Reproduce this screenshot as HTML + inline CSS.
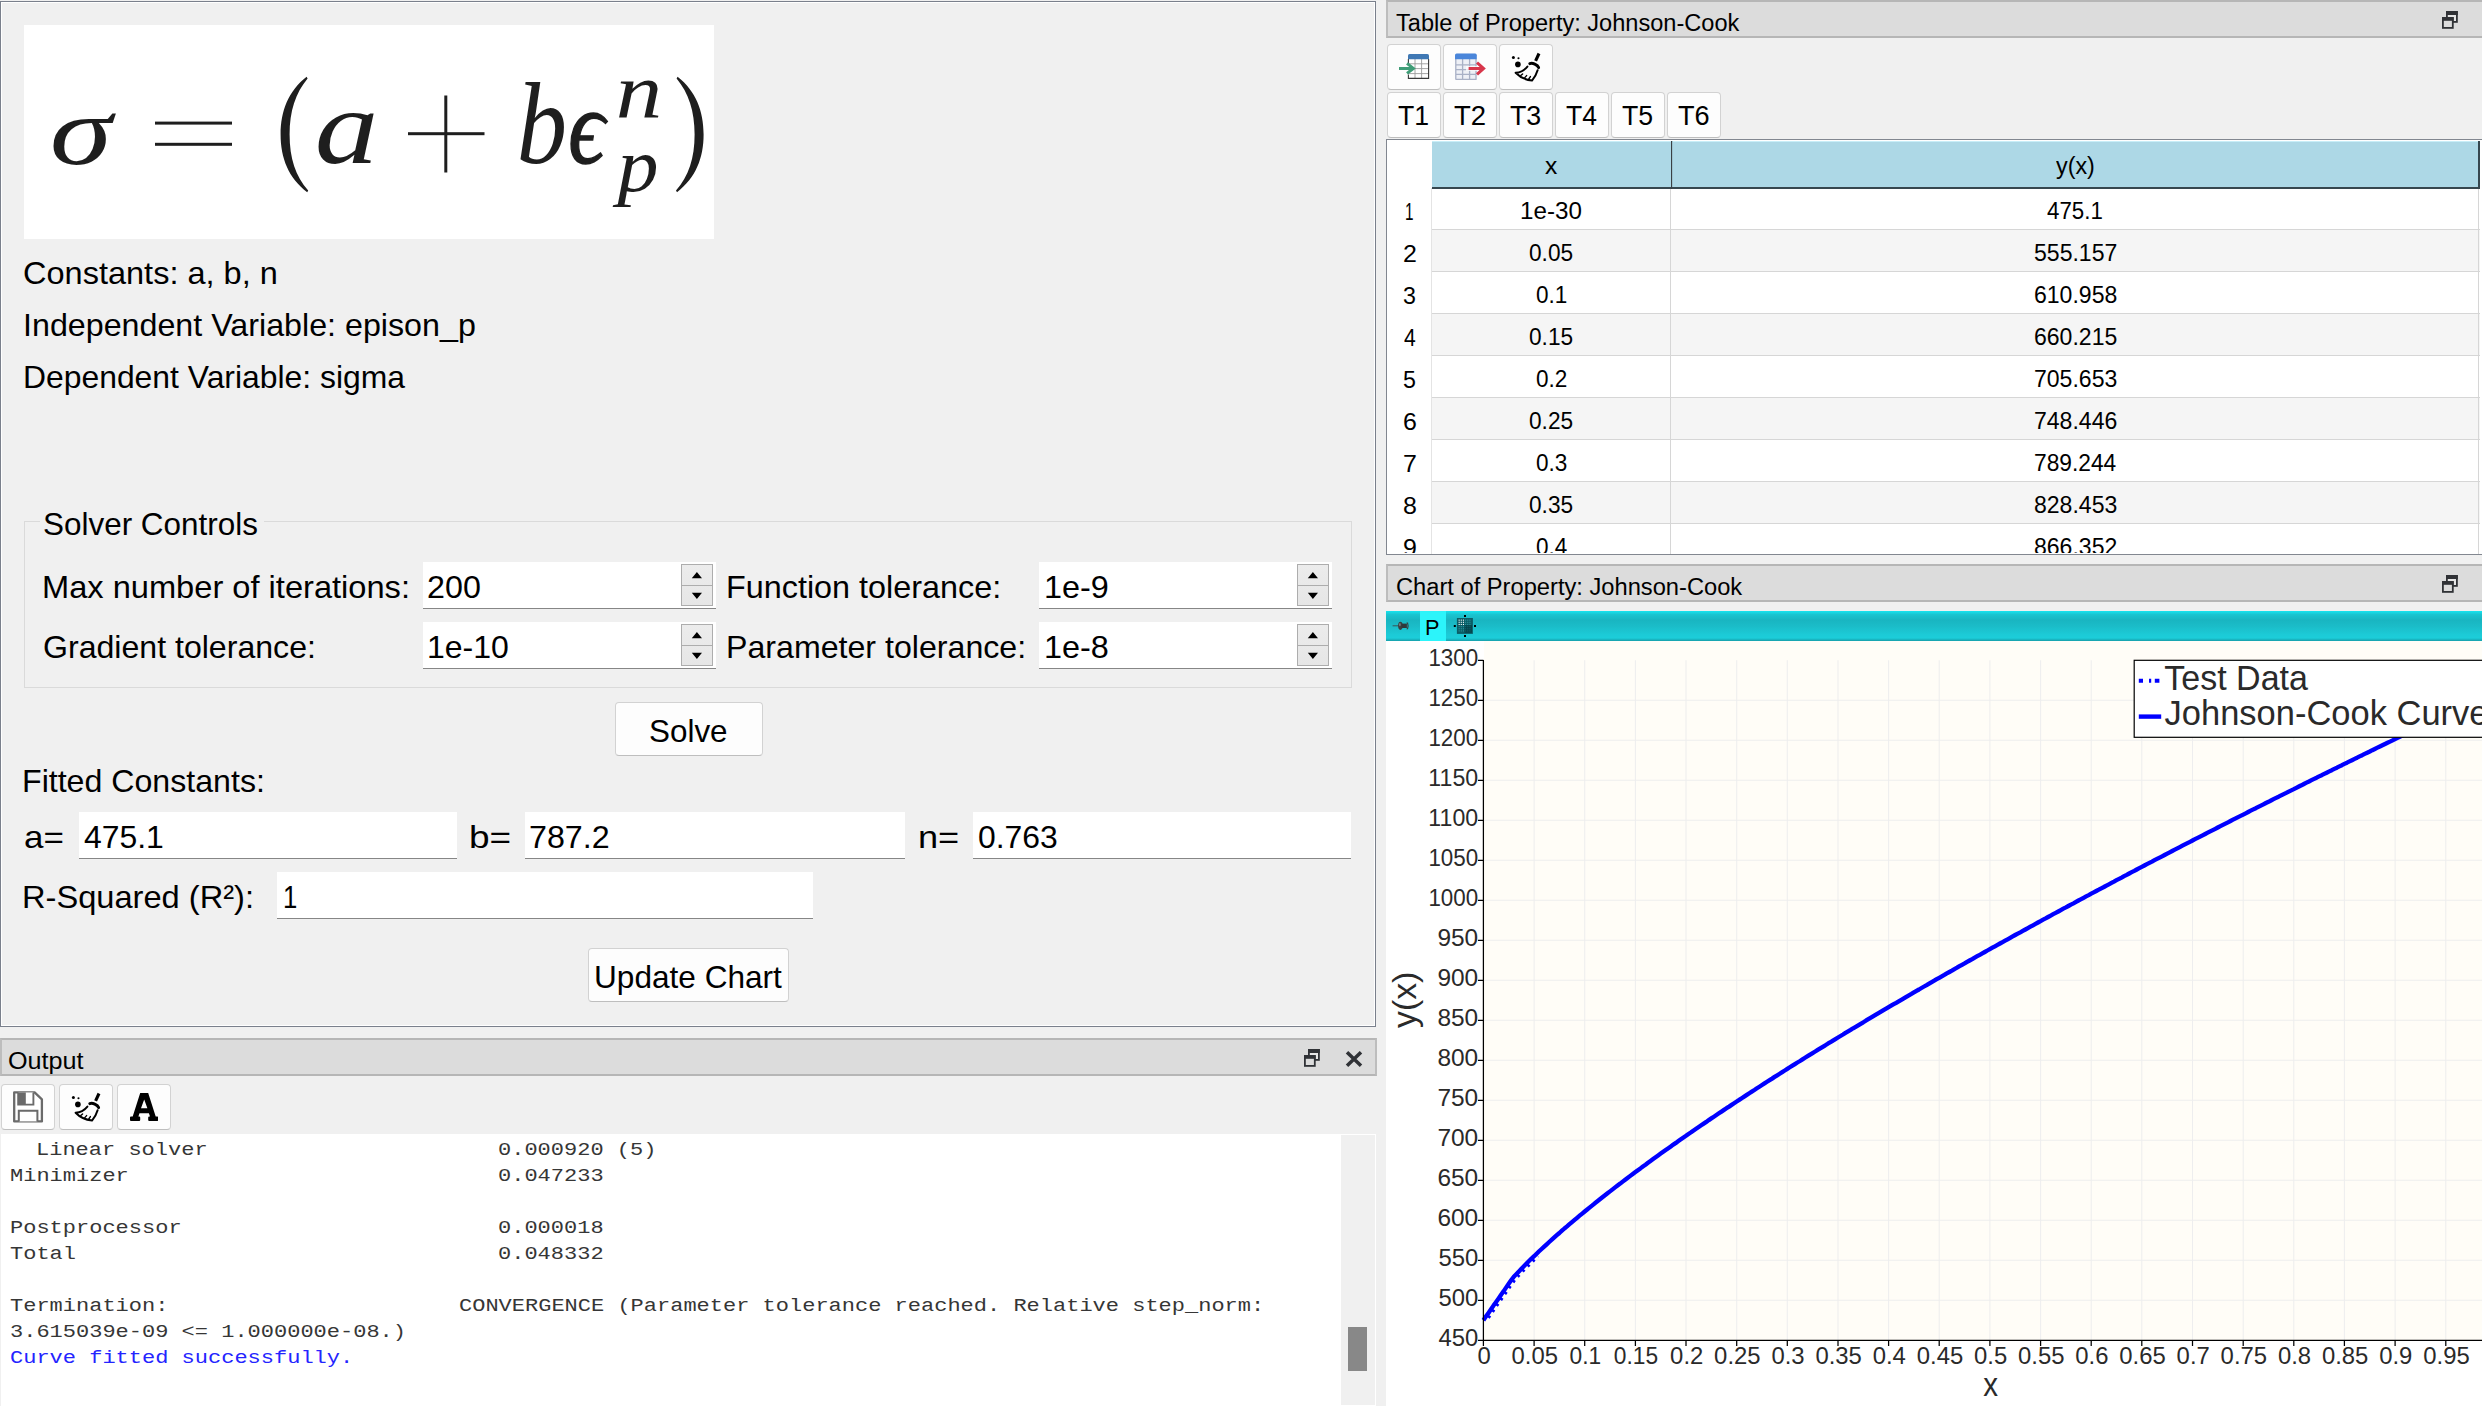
<!DOCTYPE html>
<html lang="en"><head><meta charset="utf-8"><title>Johnson-Cook Curve Fit</title><style>html,body{margin:0;padding:0}
html{width:2482px;height:1406px;overflow:hidden}
body{width:2482px;height:1406px;overflow:hidden;background:#f0f0f0;position:relative;font-family:"Liberation Sans",sans-serif;color:#000}
body div,body svg{position:absolute}
.t{white-space:pre;transform-origin:0 0}
.m{font-family:"Liberation Mono",monospace}
</style></head><body>
<div id="app" style="left:0;top:0;width:2482px;height:1406px;overflow:hidden">
<div style="left:0;top:1px;width:1376px;height:1026px;box-sizing:border-box;border:1px solid #7a808c;background:#fff"></div>
<div style="left:2px;top:3px;width:1372px;height:1022px;background:#f0f0f0;"></div>
<div style="left:24px;top:25px;width:690px;height:214px;background:#fff;"></div>
<svg style="left:0;top:0" width="740" height="250" viewBox="0 0 740 250"><text transform="translate(49.85,163.52) scale(0.6300,0.4905)" font-size="200" font-family="'Liberation Serif',serif" font-style="italic" font-weight="400" fill="#1e1e1e">σ</text><text transform="translate(314.82,162.94) scale(0.6364,0.5312)" font-size="200" font-family="'Liberation Serif',serif" font-style="italic" font-weight="400" fill="#1e1e1e">a</text><text transform="translate(516.78,163.34) scale(0.5023,0.5780)" font-size="200" font-family="'Liberation Serif',serif" font-style="italic" font-weight="400" fill="#1e1e1e">b</text><text transform="translate(568.35,162.95) scale(0.4506,0.5250)" font-size="200" font-family="'Liberation Serif',serif" font-style="italic" font-weight="400" fill="#1e1e1e" stroke="#1e1e1e" stroke-width="2.67">ϵ</text><text transform="translate(615.75,117.50) scale(0.4647,0.3947)" font-size="200" font-family="'Liberation Serif',serif" font-style="italic" font-weight="400" fill="#1e1e1e">n</text><text transform="translate(617.42,191.06) scale(0.4104,0.3796)" font-size="200" font-family="'Liberation Serif',serif" font-style="italic" font-weight="400" fill="#1e1e1e">p</text><rect x="155" y="121.6" width="77" height="3" fill="#1e1e1e"/><rect x="155" y="142.8" width="77" height="3" fill="#1e1e1e"/><rect x="408" y="132.2" width="76.5" height="3" fill="#1e1e1e"/><rect x="444.3" y="95.5" width="3" height="77" fill="#1e1e1e"/><path d="M306.6 76.8 C288.5 91 280.6 111 280.6 134.5 C280.6 158 288.5 178 307.2 192.2 L308.2 190.6 C295.5 176 289.6 158 289.6 134.5 C289.6 111 295.5 93 307.6 78.4 Z" fill="#1e1e1e"/><path d="M677.6 76.8 C695.7 91 703.6 111 703.6 134.5 C703.6 158 695.7 178 677 192.2 L676 190.6 C688.7 176 694.6 158 694.6 134.5 C694.6 111 688.7 93 676.6 78.4 Z" fill="#1e1e1e"/></svg>
<div class="t" style="left:22.98px;top:255.00px;font-size:32px;line-height:36px;transform:scaleX(1.0161);">Constants: a, b, n</div>
<div class="t" style="left:22.98px;top:307.00px;font-size:32px;line-height:36px;transform:scaleX(1.0073);">Independent Variable: epison_p</div>
<div class="t" style="left:23.00px;top:359.00px;font-size:32px;line-height:36px;transform:scaleX(0.9957);">Dependent Variable: sigma</div>
<div style="left:24px;top:521px;width:1328px;height:167px;box-sizing:border-box;border:1px solid #dadada"></div>
<div style="left:40px;top:515px;width:224px;height:14px;background:#f0f0f0;"></div>
<div class="t" style="left:43.01px;top:506.00px;font-size:32px;line-height:36px;transform:scaleX(0.9827);">Solver Controls</div>
<div class="t" style="left:41.96px;top:569.00px;font-size:32px;line-height:36px;transform:scaleX(1.0192);">Max number of iterations:</div>
<div class="t" style="left:43.00px;top:629.00px;font-size:32px;line-height:36px;transform:scaleX(1.0027);">Gradient tolerance:</div>
<div class="t" style="left:725.77px;top:569.00px;font-size:32px;line-height:36px;transform:scaleX(1.0110);">Function tolerance:</div>
<div class="t" style="left:725.79px;top:629.00px;font-size:32px;line-height:36px;transform:scaleX(1.0044);">Parameter tolerance:</div>
<div style="left:423px;top:562px;width:293px;height:47px;background:#fff;box-sizing:border-box;border-bottom:1px solid #868686"></div>
<div style="left:681px;top:564px;width:32px;height:42px;box-sizing:border-box;border:1px solid #adadad;background:linear-gradient(#ececec,#e6e6e6)"></div>
<div style="left:682px;top:585px;width:30px;height:1px;background:#adadad;"></div>
<svg style="left:681px;top:564px" width="32" height="42" viewBox="0 0 32 42"><path d="M10.8 14.3 L21 14.3 L15.9 8.1 Z M10.8 28.7 L21 28.7 L15.9 34.9 Z" fill="#000"/></svg>
<div class="t" style="left:426.97px;top:569.00px;font-size:32px;line-height:36px;transform:scaleX(1.0083);">200</div>
<div style="left:423px;top:622px;width:293px;height:47px;background:#fff;box-sizing:border-box;border-bottom:1px solid #868686"></div>
<div style="left:681px;top:624px;width:32px;height:42px;box-sizing:border-box;border:1px solid #adadad;background:linear-gradient(#ececec,#e6e6e6)"></div>
<div style="left:682px;top:645px;width:30px;height:1px;background:#adadad;"></div>
<svg style="left:681px;top:624px" width="32" height="42" viewBox="0 0 32 42"><path d="M10.8 14.3 L21 14.3 L15.9 8.1 Z M10.8 28.7 L21 28.7 L15.9 34.9 Z" fill="#000"/></svg>
<div class="t" style="left:427.00px;top:629.00px;font-size:32px;line-height:36px;">1e-10</div>
<div style="left:1039px;top:562px;width:293px;height:47px;background:#fff;box-sizing:border-box;border-bottom:1px solid #868686"></div>
<div style="left:1297px;top:564px;width:32px;height:42px;box-sizing:border-box;border:1px solid #adadad;background:linear-gradient(#ececec,#e6e6e6)"></div>
<div style="left:1298px;top:585px;width:30px;height:1px;background:#adadad;"></div>
<svg style="left:1297px;top:564px" width="32" height="42" viewBox="0 0 32 42"><path d="M10.8 14.3 L21 14.3 L15.9 8.1 Z M10.8 28.7 L21 28.7 L15.9 34.9 Z" fill="#000"/></svg>
<div class="t" style="left:1043.97px;top:569.00px;font-size:32px;line-height:36px;transform:scaleX(1.0125);">1e-9</div>
<div style="left:1039px;top:622px;width:293px;height:47px;background:#fff;box-sizing:border-box;border-bottom:1px solid #868686"></div>
<div style="left:1297px;top:624px;width:32px;height:42px;box-sizing:border-box;border:1px solid #adadad;background:linear-gradient(#ececec,#e6e6e6)"></div>
<div style="left:1298px;top:645px;width:30px;height:1px;background:#adadad;"></div>
<svg style="left:1297px;top:624px" width="32" height="42" viewBox="0 0 32 42"><path d="M10.8 14.3 L21 14.3 L15.9 8.1 Z M10.8 28.7 L21 28.7 L15.9 34.9 Z" fill="#000"/></svg>
<div class="t" style="left:1043.97px;top:629.00px;font-size:32px;line-height:36px;transform:scaleX(1.0128);">1e-8</div>
<div style="left:615px;top:702px;width:148px;height:54px;box-sizing:border-box;border:1px solid #d2d2d2;border-bottom-color:#bebebe;border-radius:4px;background:#fdfdfd"></div>
<div class="t" style="left:649.00px;top:713.00px;font-size:32px;line-height:36px;transform:scaleX(0.9818);">Solve</div>
<div class="t" style="left:21.99px;top:763.00px;font-size:32px;line-height:36px;transform:scaleX(1.0042);">Fitted Constants:</div>
<div style="left:79px;top:812px;width:378px;height:47px;background:#fff;box-sizing:border-box;border-bottom:1px solid #868686"></div>
<div style="left:525px;top:812px;width:380px;height:47px;background:#fff;box-sizing:border-box;border-bottom:1px solid #868686"></div>
<div style="left:973px;top:812px;width:378px;height:47px;background:#fff;box-sizing:border-box;border-bottom:1px solid #868686"></div>
<div class="t" style="left:23.92px;top:819.00px;font-size:32px;line-height:36px;transform:scaleX(1.0929);">a=</div>
<div class="t" style="left:83.96px;top:819.00px;font-size:32px;line-height:36px;transform:scaleX(0.9971);">475.1</div>
<div class="t" style="left:468.69px;top:819.00px;font-size:32px;line-height:36px;transform:scaleX(1.1548);">b=</div>
<div class="t" style="left:528.97px;top:819.00px;font-size:32px;line-height:36px;transform:scaleX(1.0070);">787.2</div>
<div class="t" style="left:917.54px;top:819.00px;font-size:32px;line-height:36px;transform:scaleX(1.1306);">n=</div>
<div class="t" style="left:977.80px;top:819.00px;font-size:32px;line-height:36px;transform:scaleX(0.9965);">0.763</div>
<div class="t" style="left:21.96px;top:879.00px;font-size:32px;line-height:36px;transform:scaleX(1.0192);">R-Squared (R²):</div>
<div style="left:277px;top:872px;width:536px;height:47px;background:#fff;box-sizing:border-box;border-bottom:1px solid #868686"></div>
<div class="t" style="left:283.39px;top:879.00px;font-size:32px;line-height:36px;transform:scaleX(0.8030);">1</div>
<div style="left:588px;top:948px;width:201px;height:54px;box-sizing:border-box;border:1px solid #d2d2d2;border-bottom-color:#bebebe;border-radius:4px;background:#fdfdfd"></div>
<div class="t" style="left:593.83px;top:959.00px;font-size:32px;line-height:36px;transform:scaleX(0.9871);">Update Chart</div>
<div style="left:0px;top:1038px;width:1377px;height:38px;box-sizing:border-box;background:#dcdcdc;border:2px solid #b6b6b6;border-left-color:#bdbdbd;border-right-color:#bdbdbd"></div>
<div class="t" style="left:7.93px;top:1047.70px;font-size:23.5px;line-height:26px;transform:scaleX(1.0713);">Output</div>
<svg style="left:1304.1px;top:1049.05px" width="17" height="19" viewBox="0 0 17 19"><rect x="4.9" y="0.9" width="10" height="10" fill="#e6e6e6" stroke="#303236" stroke-width="1.8"/><rect x="4" y="0" width="11.8" height="4" fill="#303236"/><rect x="0.9" y="7" width="9.9" height="9.9" fill="#dcdcdc" stroke="#303236" stroke-width="1.8"/><rect x="0" y="6.1" width="11.7" height="3.7" fill="#303236"/></svg>
<svg style="left:1344px;top:1049px" width="20" height="20" viewBox="0 0 20 20"><path d="M3 3.2 L17 16.8 M17 3.2 L3 16.8" stroke="#303236" stroke-width="3.5" fill="none"/></svg>
<div style="left:1px;top:1084px;width:54px;height:46px;box-sizing:border-box;border:1px solid #d2d2d2;border-bottom-color:#bebebe;border-radius:4px;background:#fdfdfd"></div>
<div style="left:59px;top:1084px;width:54px;height:46px;box-sizing:border-box;border:1px solid #d2d2d2;border-bottom-color:#bebebe;border-radius:4px;background:#fdfdfd"></div>
<div style="left:117px;top:1084px;width:54px;height:46px;box-sizing:border-box;border:1px solid #d2d2d2;border-bottom-color:#bebebe;border-radius:4px;background:#fdfdfd"></div>
<svg style="left:12px;top:1090px" width="33" height="34" viewBox="0 0 33 34"><path d="M2.2 2.4 H22.6 L29.9 9.3 V31.4 H2.2 Z" fill="#fff" stroke="#6a6a6a" stroke-width="2.3" stroke-linejoin="round"/><path d="M6.2 2.4 V14.6 H21.4 V2.4" fill="#fff" stroke="#6a6a6a" stroke-width="1.9"/><rect x="6.2" y="2.4" width="7.6" height="12.2" fill="#6a6a6a"/><path d="M6.8 31.4 V20.8 H25.4 V31.4" fill="#fff" stroke="#6a6a6a" stroke-width="2"/></svg><svg style="left:70.5px;top:1091.6px" width="31" height="31" viewBox="0 0 31 31"><g fill="none" stroke="#000" stroke-linecap="round" stroke-linejoin="round">
<path d="M28 1.5 L24.6 8.8" stroke-width="3.1" stroke-linecap="butt"/>
<path d="M18.8 11.6 C21.5 10.6 26.5 12.6 27.6 15.6" stroke-width="3"/>
<path d="M16.4 14.6 C13 18.8 8.6 20.6 4.6 20.8 C8.6 25 14.2 27.8 21 28.6 C23.6 25.6 25.6 21.6 26.6 18.2" stroke-width="2"/>
<path d="M9.8 23.6 L11.6 22 M13.8 25.6 L15.6 23.6 M17.8 27 L19.4 24.6" stroke-width="1.4"/>
</g>
<circle cx="2.4" cy="5.6" r="1.5" fill="#000"/><circle cx="7.5" cy="6.2" r="1.05" fill="#000"/><circle cx="6.9" cy="12.4" r="2.8" fill="#000"/></svg><svg style="left:129.8px;top:1093px" width="28.4" height="28" viewBox="0 0 28.4 28"><path fill-rule="evenodd" d="M10.2 0 H18.2 L25.7 23.6 H27.4 Q28.4 23.6 28.4 24.6 V27 Q28.4 28 27.4 28 H19.2 Q18.2 28 18.2 27 V24.6 Q18.2 23.6 19.2 23.6 H20 L18.9 20.3 H9.5 L8.4 23.6 H9.2 Q10.2 23.6 10.2 24.6 V27 Q10.2 28 9.2 28 H1 Q0 28 0 27 V24.6 Q0 23.6 1 23.6 H2.7 Z M14.2 6.6 L11 15.2 H17.4 Z" fill="#000"/></svg>
<div style="left:1px;top:1134px;width:1375px;height:272px;background:#fff;"></div>
<div style="left:1341px;top:1135px;width:34px;height:270px;background:#f0f0f0;"></div>
<div style="left:1348px;top:1327px;width:19px;height:44px;background:#888888;"></div>
<div class="t m" style="left:36.40px;top:1139.00px;font-size:19px;line-height:22px;transform:scaleX(1.1577);color:#363636;">Linear solver</div>
<div class="t m" style="left:498.40px;top:1139.00px;font-size:19px;line-height:22px;transform:scaleX(1.1577);color:#363636;">0.000920 (5)</div>
<div class="t m" style="left:10.00px;top:1165.00px;font-size:19px;line-height:22px;transform:scaleX(1.1577);color:#363636;">Minimizer</div>
<div class="t m" style="left:498.40px;top:1165.00px;font-size:19px;line-height:22px;transform:scaleX(1.1577);color:#363636;">0.047233</div>
<div class="t m" style="left:10.00px;top:1217.00px;font-size:19px;line-height:22px;transform:scaleX(1.1577);color:#363636;">Postprocessor</div>
<div class="t m" style="left:498.40px;top:1217.00px;font-size:19px;line-height:22px;transform:scaleX(1.1577);color:#363636;">0.000018</div>
<div class="t m" style="left:10.00px;top:1243.00px;font-size:19px;line-height:22px;transform:scaleX(1.1577);color:#363636;">Total</div>
<div class="t m" style="left:498.40px;top:1243.00px;font-size:19px;line-height:22px;transform:scaleX(1.1577);color:#363636;">0.048332</div>
<div class="t m" style="left:10.00px;top:1295.00px;font-size:19px;line-height:22px;transform:scaleX(1.1577);color:#363636;">Termination:</div>
<div class="t m" style="left:458.80px;top:1295.00px;font-size:19px;line-height:22px;transform:scaleX(1.1577);color:#363636;">CONVERGENCE (Parameter tolerance reached. Relative step_norm:</div>
<div class="t m" style="left:10.00px;top:1321.00px;font-size:19px;line-height:22px;transform:scaleX(1.1577);color:#363636;">3.615039e-09 &lt;= 1.000000e-08.)</div>
<div class="t m" style="left:10.00px;top:1347.00px;font-size:19px;line-height:22px;transform:scaleX(1.1577);color:#2424ff;">Curve fitted successfully.</div>
<div style="left:1386px;top:0px;width:1100px;height:38px;box-sizing:border-box;background:#dcdcdc;border:2px solid #b6b6b6;border-left-color:#bdbdbd;border-right-color:#bdbdbd"></div>
<div class="t" style="left:1395.60px;top:9.50px;font-size:23.5px;line-height:26px;transform:scaleX(1.0032);">Table of Property: Johnson-Cook</div>
<svg style="left:2441.6px;top:11px" width="17" height="19" viewBox="0 0 17 19"><rect x="4.9" y="0.9" width="10" height="10" fill="#e6e6e6" stroke="#303236" stroke-width="1.8"/><rect x="4" y="0" width="11.8" height="4" fill="#303236"/><rect x="0.9" y="7" width="9.9" height="9.9" fill="#dcdcdc" stroke="#303236" stroke-width="1.8"/><rect x="0" y="6.1" width="11.7" height="3.7" fill="#303236"/></svg>
<div style="left:1387px;top:44px;width:54px;height:46px;box-sizing:border-box;border:1px solid #d2d2d2;border-bottom-color:#bebebe;border-radius:4px;background:#fdfdfd"></div>
<div style="left:1443px;top:44px;width:54px;height:46px;box-sizing:border-box;border:1px solid #d2d2d2;border-bottom-color:#bebebe;border-radius:4px;background:#fdfdfd"></div>
<div style="left:1499px;top:44px;width:54px;height:46px;box-sizing:border-box;border:1px solid #d2d2d2;border-bottom-color:#bebebe;border-radius:4px;background:#fdfdfd"></div>
<svg style="left:1396px;top:50px" width="38" height="34" viewBox="0 0 38 34">
<rect x="12.2" y="4.2" width="20.6" height="24.4" fill="#fff"/>
<path d="M19 9 V28.6 M25.6 9 V28.6 M12.2 13.8 H32.8 M12.2 18.6 H32.8 M12.2 23.6 H32.8" stroke="#9c9c9c" stroke-width="0.9" fill="none"/>
<path d="M12.4 9 V13 M12.4 24.6 V28.4 H32.6 V9" stroke="#3a3a3a" stroke-width="1.1" fill="none"/>
<path d="M12 9.2 V5.6 Q12 4 13.6 4 H31.4 Q33 4 33 5.6 V9.2 Z" fill="#3f78b4"/>
<path d="M3 18.4 H16 M11 13.4 L17.4 18.4 L11 23.4" stroke="#3f9d77" stroke-width="3" fill="none"/>
</svg><svg style="left:1452px;top:50px" width="38" height="34" viewBox="0 0 38 34">
<rect x="3" y="3.6" width="21.8" height="26.4" rx="1.6" fill="#eef0f6"/>
<path d="M3.8 9 V29 M10.6 9 V29.4 M17.6 9 V29.4 M24 9 V29 M3.4 14.8 H24.6 M3.4 19.6 H24.6 M3.4 24.4 H24.6 M3.4 29.4 H24.6" stroke="#a9b1c6" stroke-width="1.3" fill="none"/>
<path d="M3 9.2 V5.2 Q3 3.5 4.7 3.5 H23.1 Q24.8 3.5 24.8 5.2 V9.2 Z" fill="#4a86da"/>
<path d="M14 16 H33 V21 H14 Z" fill="#fdfdfd" opacity="0.75"/>
<path d="M16.6 18.4 H30 M25 12.6 L31.6 18.4 L25 24.4" stroke="#d8364b" stroke-width="3" fill="none"/>
</svg><svg style="left:1510.6px;top:52px" width="31" height="31" viewBox="0 0 31 31"><g fill="none" stroke="#000" stroke-linecap="round" stroke-linejoin="round">
<path d="M28 1.5 L24.6 8.8" stroke-width="3.1" stroke-linecap="butt"/>
<path d="M18.8 11.6 C21.5 10.6 26.5 12.6 27.6 15.6" stroke-width="3"/>
<path d="M16.4 14.6 C13 18.8 8.6 20.6 4.6 20.8 C8.6 25 14.2 27.8 21 28.6 C23.6 25.6 25.6 21.6 26.6 18.2" stroke-width="2"/>
<path d="M9.8 23.6 L11.6 22 M13.8 25.6 L15.6 23.6 M17.8 27 L19.4 24.6" stroke-width="1.4"/>
</g>
<circle cx="2.4" cy="5.6" r="1.5" fill="#000"/><circle cx="7.5" cy="6.2" r="1.05" fill="#000"/><circle cx="6.9" cy="12.4" r="2.8" fill="#000"/></svg>
<div style="left:1387px;top:92px;width:54px;height:46px;box-sizing:border-box;border:1px solid #d2d2d2;border-bottom-color:#bebebe;border-radius:4px;background:#fdfdfd"></div>
<div class="t" style="left:1397.85px;top:99.80px;font-size:28px;line-height:31px;transform:scaleX(0.9518);">T1</div>
<div style="left:1443px;top:92px;width:54px;height:46px;box-sizing:border-box;border:1px solid #d2d2d2;border-bottom-color:#bebebe;border-radius:4px;background:#fdfdfd"></div>
<div class="t" style="left:1454.04px;top:99.80px;font-size:28px;line-height:31px;transform:scaleX(0.9829);">T2</div>
<div style="left:1499px;top:92px;width:54px;height:46px;box-sizing:border-box;border:1px solid #d2d2d2;border-bottom-color:#bebebe;border-radius:4px;background:#fdfdfd"></div>
<div class="t" style="left:1509.88px;top:99.80px;font-size:28px;line-height:31px;transform:scaleX(0.9570);">T3</div>
<div style="left:1555px;top:92px;width:54px;height:46px;box-sizing:border-box;border:1px solid #d2d2d2;border-bottom-color:#bebebe;border-radius:4px;background:#fdfdfd"></div>
<div class="t" style="left:1565.67px;top:99.80px;font-size:28px;line-height:31px;transform:scaleX(0.9456);">T4</div>
<div style="left:1611px;top:92px;width:54px;height:46px;box-sizing:border-box;border:1px solid #d2d2d2;border-bottom-color:#bebebe;border-radius:4px;background:#fdfdfd"></div>
<div class="t" style="left:1621.87px;top:99.80px;font-size:28px;line-height:31px;transform:scaleX(0.9521);">T5</div>
<div style="left:1667px;top:92px;width:54px;height:46px;box-sizing:border-box;border:1px solid #d2d2d2;border-bottom-color:#bebebe;border-radius:4px;background:#fdfdfd"></div>
<div class="t" style="left:1678.05px;top:99.80px;font-size:28px;line-height:31px;transform:scaleX(0.9699);">T6</div>
<div style="left:1386px;top:139px;width:1100px;height:416px;box-sizing:border-box;border:1px solid #828790;background:#fff;overflow:hidden" id="tbl">
<div style="left:45px;top:48px;width:1048px;height:42px;background:#fff;"></div>
<div style="left:45px;top:89px;width:1048px;height:1px;background:#d6d6d6;"></div>
<div style="left:45px;top:90px;width:1048px;height:42px;background:#f5f5f5;"></div>
<div style="left:45px;top:131px;width:1048px;height:1px;background:#d6d6d6;"></div>
<div style="left:45px;top:132px;width:1048px;height:42px;background:#fff;"></div>
<div style="left:45px;top:173px;width:1048px;height:1px;background:#d6d6d6;"></div>
<div style="left:45px;top:174px;width:1048px;height:42px;background:#f5f5f5;"></div>
<div style="left:45px;top:215px;width:1048px;height:1px;background:#d6d6d6;"></div>
<div style="left:45px;top:216px;width:1048px;height:42px;background:#fff;"></div>
<div style="left:45px;top:257px;width:1048px;height:1px;background:#d6d6d6;"></div>
<div style="left:45px;top:258px;width:1048px;height:42px;background:#f5f5f5;"></div>
<div style="left:45px;top:299px;width:1048px;height:1px;background:#d6d6d6;"></div>
<div style="left:45px;top:300px;width:1048px;height:42px;background:#fff;"></div>
<div style="left:45px;top:341px;width:1048px;height:1px;background:#d6d6d6;"></div>
<div style="left:45px;top:342px;width:1048px;height:42px;background:#f5f5f5;"></div>
<div style="left:45px;top:383px;width:1048px;height:1px;background:#d6d6d6;"></div>
<div style="left:45px;top:384px;width:1048px;height:42px;background:#fff;"></div>
<div style="left:45px;top:425px;width:1048px;height:1px;background:#d6d6d6;"></div>
<div style="left:44px;top:48px;width:1px;height:380px;background:#e4e4e4;"></div>
<div style="left:283px;top:48px;width:1px;height:380px;background:#d6d6d6;"></div>
<div style="left:1091px;top:49px;width:1px;height:380px;background:#d6d6d6;"></div>
<div style="left:45px;top:1px;width:1048px;height:48px;background:#add8e6;box-sizing:border-box;border-bottom:2px solid #36474f;border-top:1px solid #c8eef8"></div>
<div style="left:284px;top:1px;width:1px;height:48px;background:#3a4044;"></div>
<div style="left:285px;top:1px;width:1px;height:46px;background:#9cc4d1;"></div>
<div style="left:1091px;top:1px;width:2px;height:48px;background:#36474f;"></div>

</div>
<div style="left:1387px;top:140px;width:1095px;height:413px;overflow:hidden">
<div class="t" style="left:158.33px;top:12.80px;font-size:23px;line-height:26px;transform:scaleX(1.0694);">x</div>
<div class="t" style="left:669.39px;top:12.80px;font-size:23px;line-height:26px;transform:scaleX(1.0147);">y(x)</div>
<div class="t" style="left:17.97px;top:57.80px;font-size:24px;line-height:27px;transform:scaleX(0.6375);">1</div>
<div class="t" style="left:133.02px;top:57.10px;font-size:24px;line-height:27px;transform:scaleX(1.0079);">1e-30</div>
<div class="t" style="left:660.48px;top:57.10px;font-size:24px;line-height:27px;transform:scaleX(0.9286);">475.1</div>
<div class="t" style="left:16.19px;top:99.80px;font-size:24px;line-height:27px;transform:scaleX(1.0392);">2</div>
<div class="t" style="left:141.93px;top:99.10px;font-size:24px;line-height:27px;transform:scaleX(0.9432);">0.05</div>
<div class="t" style="left:646.69px;top:99.10px;font-size:24px;line-height:27px;transform:scaleX(0.9604);">555.157</div>
<div class="t" style="left:16.05px;top:141.80px;font-size:24px;line-height:27px;transform:scaleX(0.9672);">3</div>
<div class="t" style="left:148.80px;top:141.10px;font-size:24px;line-height:27px;transform:scaleX(0.9391);">0.1</div>
<div class="t" style="left:646.76px;top:141.10px;font-size:24px;line-height:27px;transform:scaleX(0.9597);">610.958</div>
<div class="t" style="left:17.19px;top:183.80px;font-size:24px;line-height:27px;transform:scaleX(0.8793);">4</div>
<div class="t" style="left:141.93px;top:183.10px;font-size:24px;line-height:27px;transform:scaleX(0.9432);">0.15</div>
<div class="t" style="left:646.76px;top:183.10px;font-size:24px;line-height:27px;transform:scaleX(0.9597);">660.215</div>
<div class="t" style="left:16.05px;top:225.80px;font-size:24px;line-height:27px;transform:scaleX(0.9672);">5</div>
<div class="t" style="left:148.80px;top:225.10px;font-size:24px;line-height:27px;transform:scaleX(0.9391);">0.2</div>
<div class="t" style="left:646.76px;top:225.10px;font-size:24px;line-height:27px;transform:scaleX(0.9597);">705.653</div>
<div class="t" style="left:16.19px;top:267.80px;font-size:24px;line-height:27px;transform:scaleX(1.0392);">6</div>
<div class="t" style="left:141.93px;top:267.10px;font-size:24px;line-height:27px;transform:scaleX(0.9432);">0.25</div>
<div class="t" style="left:646.76px;top:267.10px;font-size:24px;line-height:27px;transform:scaleX(0.9597);">748.446</div>
<div class="t" style="left:16.19px;top:309.80px;font-size:24px;line-height:27px;transform:scaleX(1.0392);">7</div>
<div class="t" style="left:148.80px;top:309.10px;font-size:24px;line-height:27px;transform:scaleX(0.9391);">0.3</div>
<div class="t" style="left:646.77px;top:309.10px;font-size:24px;line-height:27px;transform:scaleX(0.9480);">789.244</div>
<div class="t" style="left:16.19px;top:351.80px;font-size:24px;line-height:27px;transform:scaleX(1.0392);">8</div>
<div class="t" style="left:141.93px;top:351.10px;font-size:24px;line-height:27px;transform:scaleX(0.9432);">0.35</div>
<div class="t" style="left:646.76px;top:351.10px;font-size:24px;line-height:27px;transform:scaleX(0.9597);">828.453</div>
<div class="t" style="left:16.19px;top:393.80px;font-size:24px;line-height:27px;transform:scaleX(1.0392);">9</div>
<div class="t" style="left:148.82px;top:393.10px;font-size:24px;line-height:27px;transform:scaleX(0.9391);">0.4</div>
<div class="t" style="left:646.75px;top:393.10px;font-size:24px;line-height:27px;transform:scaleX(0.9598);">866.352</div>
</div>
<div style="left:1386px;top:564px;width:1100px;height:38px;box-sizing:border-box;background:#dcdcdc;border:2px solid #b6b6b6;border-left-color:#bdbdbd;border-right-color:#bdbdbd"></div>
<div class="t" style="left:1395.59px;top:573.80px;font-size:23.5px;line-height:26px;transform:scaleX(1.0077);">Chart of Property: Johnson-Cook</div>
<svg style="left:2441.6px;top:575px" width="17" height="19" viewBox="0 0 17 19"><rect x="4.9" y="0.9" width="10" height="10" fill="#e6e6e6" stroke="#303236" stroke-width="1.8"/><rect x="4" y="0" width="11.8" height="4" fill="#303236"/><rect x="0.9" y="7" width="9.9" height="9.9" fill="#dcdcdc" stroke="#303236" stroke-width="1.8"/><rect x="0" y="6.1" width="11.7" height="3.7" fill="#303236"/></svg>
<div style="left:1386px;top:611px;width:1096px;height:30px;background:linear-gradient(to bottom,#17e4f0 0%,#1ac4d0 12%,#19b5c1 30%,#1bbcc8 50%,#1ccbd7 80%,#1ccdd9 90%,#169faa 100%)"></div>
<div style="left:1420px;top:611px;width:26px;height:30px;background:#2cf4fa;"></div>
<div class="t" style="left:1425.49px;top:614.60px;font-size:22.5px;line-height:25px;transform:scaleX(0.9651);">P</div>
<svg style="left:1391px;top:618px" width="20" height="16" viewBox="0 0 20 16">
<path d="M1.6 7.8 H8" stroke="#3c4a4c" stroke-width="0.9"/>
<ellipse cx="9.4" cy="7.8" rx="2.3" ry="4.1" fill="#3a4042"/>
<rect x="10.5" y="5.6" width="5.4" height="4.4" fill="#30383a"/>
<path d="M15.4 4.4 Q17.6 7.8 15.4 11.2 L17 11.2 Q18.4 7.8 17 4.4 Z" fill="#3a4244"/>
<ellipse cx="8.9" cy="6.6" rx="0.8" ry="1.6" fill="#7c8688"/>
</svg><svg style="left:1452px;top:613px" width="26" height="26" viewBox="0 0 26 26"><rect x="4.9" y="5" width="16" height="15.9" fill="#0b5d66"/><rect x="12.6" y="12.2" width="7.4" height="7.6" fill="#07454c"/><rect x="6.60" y="6.60" width="1.1" height="1.1" fill="#ffffff"/><rect x="8.75" y="6.60" width="1.1" height="1.1" fill="#ffffff"/><rect x="10.90" y="6.60" width="1.1" height="1.1" fill="#ffffff"/><rect x="13.05" y="6.60" width="1.1" height="1.1" fill="#2b98a2"/><rect x="15.20" y="6.60" width="1.1" height="1.1" fill="#2b98a2"/><rect x="17.35" y="6.60" width="1.1" height="1.1" fill="#2b98a2"/><rect x="6.60" y="8.75" width="1.1" height="1.1" fill="#ffffff"/><rect x="8.75" y="8.75" width="1.1" height="1.1" fill="#ffffff"/><rect x="10.90" y="8.75" width="1.1" height="1.1" fill="#ffffff"/><rect x="13.05" y="8.75" width="1.1" height="1.1" fill="#2b98a2"/><rect x="15.20" y="8.75" width="1.1" height="1.1" fill="#2b98a2"/><rect x="17.35" y="8.75" width="1.1" height="1.1" fill="#2b98a2"/><rect x="6.60" y="10.90" width="1.1" height="1.1" fill="#ffffff"/><rect x="8.75" y="10.90" width="1.1" height="1.1" fill="#ffffff"/><rect x="10.90" y="10.90" width="1.1" height="1.1" fill="#ffffff"/><rect x="13.05" y="10.90" width="1.1" height="1.1" fill="#2b98a2"/><rect x="15.20" y="10.90" width="1.1" height="1.1" fill="#2b98a2"/><rect x="17.35" y="10.90" width="1.1" height="1.1" fill="#2b98a2"/><rect x="6.60" y="13.05" width="1.1" height="1.1" fill="#2b98a2"/><rect x="8.75" y="13.05" width="1.1" height="1.1" fill="#2b98a2"/><rect x="10.90" y="13.05" width="1.1" height="1.1" fill="#2b98a2"/><rect x="13.05" y="13.05" width="1.1" height="1.1" fill="#0d6670"/><rect x="15.20" y="13.05" width="1.1" height="1.1" fill="#0d6670"/><rect x="17.35" y="13.05" width="1.1" height="1.1" fill="#0d6670"/><rect x="6.60" y="15.20" width="1.1" height="1.1" fill="#2b98a2"/><rect x="8.75" y="15.20" width="1.1" height="1.1" fill="#2b98a2"/><rect x="10.90" y="15.20" width="1.1" height="1.1" fill="#2b98a2"/><rect x="13.05" y="15.20" width="1.1" height="1.1" fill="#0d6670"/><rect x="15.20" y="15.20" width="1.1" height="1.1" fill="#0d6670"/><rect x="17.35" y="15.20" width="1.1" height="1.1" fill="#0d6670"/><rect x="6.60" y="17.35" width="1.1" height="1.1" fill="#2b98a2"/><rect x="8.75" y="17.35" width="1.1" height="1.1" fill="#2b98a2"/><rect x="10.90" y="17.35" width="1.1" height="1.1" fill="#2b98a2"/><rect x="13.05" y="17.35" width="1.1" height="1.1" fill="#0d6670"/><rect x="15.20" y="17.35" width="1.1" height="1.1" fill="#0d6670"/><rect x="17.35" y="17.35" width="1.1" height="1.1" fill="#0d6670"/><rect x="12" y="2" width="2" height="2" fill="#000"/><rect x="12" y="22" width="2" height="2" fill="#000"/><rect x="1.8" y="12" width="2" height="2" fill="#000"/><rect x="22" y="12" width="2" height="2" fill="#000"/></svg>
<svg style="left:1386px;top:641px" width="1096" height="765" viewBox="0 0 1096 765" font-family="'Liberation Sans',sans-serif"><rect x="0" y="0" width="1096" height="765" fill="#fff"/><rect x="98" y="0" width="998" height="699" fill="#fffdf7"/><path d="M148.1 19.3V699M198.7 19.3V699M249.4 19.3V699M300.0 19.3V699M350.7 19.3V699M401.3 19.3V699M452.0 19.3V699M502.6 19.3V699M553.2 19.3V699M603.9 19.3V699M654.6 19.3V699M705.2 19.3V699M755.8 19.3V699M806.5 19.3V699M857.2 19.3V699M907.8 19.3V699M958.4 19.3V699M1009.1 19.3V699M1059.8 19.3V699M98 659.3H1096M98 619.3H1096M98 579.3H1096M98 539.3H1096M98 499.3H1096M98 459.3H1096M98 419.3H1096M98 379.3H1096M98 339.3H1096M98 299.3H1096M98 259.3H1096M98 219.3H1096M98 179.3H1096M98 139.3H1096M98 99.3H1096M98 59.3H1096" stroke="#eeeeee" stroke-width="1.05" fill="none"/><polyline points="102.3,676.7 103.4,675.3 104.4,673.8 105.4,672.4 106.4,670.9 107.4,669.5 108.4,668.0 109.4,666.5 110.4,665.1 111.5,663.6 112.5,662.2 113.5,660.7 114.5,659.3 115.5,657.8 116.5,656.3 117.5,654.9 118.5,653.4 119.6,652.0 120.6,650.5 121.6,649.1 122.6,647.6 123.6,646.1 124.6,644.7 125.6,643.2 126.7,641.8 127.7,640.3 128.7,638.9 129.7,637.7 130.7,636.6 131.7,635.6 132.7,634.5 133.7,633.4 134.8,632.3 135.8,631.3 136.8,630.2 137.8,629.2 138.8,628.1 139.8,627.1 140.8,626.1 141.8,625.1 142.9,624.0 143.9,623.0 144.9,622.0 145.9,621.0 146.9,620.0 147.9,619.0 148.9,618.1 150.0,617.1 151.0,616.1 152.0,615.1" fill="none" stroke="#0000ff" stroke-width="3.2" stroke-dasharray="2.6 4.6"/><polyline points="97.4,679.2 99.9,675.6 102.5,671.9 105.0,668.3 107.5,664.6 110.1,661.0 112.6,657.4 115.1,653.7 117.7,650.1 120.2,646.4 122.7,642.8 125.3,639.1 127.8,635.8 130.3,633.1 132.9,630.4 135.4,627.8 137.9,625.2 140.5,622.6 143.0,620.1 145.5,617.6 148.1,615.2 150.6,612.7 153.1,610.3 155.6,608.0 158.2,605.6 160.7,603.3 163.2,601.0 165.8,598.7 168.3,596.4 170.8,594.2 173.4,592.0 175.9,589.7 178.4,587.5 181.0,585.4 183.5,583.2 186.0,581.1 188.6,578.9 191.1,576.8 193.6,574.7 196.2,572.6 198.7,570.5 201.2,568.5 203.8,566.4 206.3,564.4 208.8,562.3 211.4,560.3 213.9,558.3 216.4,556.3 219.0,554.3 221.5,552.3 224.0,550.4 226.6,548.4 229.1,546.4 231.6,544.5 234.2,542.6 236.7,540.6 239.2,538.7 241.8,536.8 244.3,534.9 246.8,533.0 249.4,531.1 251.9,529.2 254.4,527.4 256.9,525.5 259.5,523.7 262.0,521.8 264.5,520.0 267.1,518.1 269.6,516.3 272.1,514.5 274.7,512.6 277.2,510.8 279.7,509.0 282.3,507.2 284.8,505.4 287.3,503.6 289.9,501.9 292.4,500.1 294.9,498.3 297.5,496.5 300.0,494.8 302.5,493.0 305.1,491.3 307.6,489.5 310.1,487.8 312.7,486.0 315.2,484.3 317.7,482.6 320.3,480.9 322.8,479.1 325.3,477.4 327.9,475.7 330.4,474.0 332.9,472.3 335.5,470.6 338.0,468.9 340.5,467.2 343.1,465.6 345.6,463.9 348.1,462.2 350.7,460.5 353.2,458.9 355.7,457.2 358.2,455.6 360.8,453.9 363.3,452.2 365.8,450.6 368.4,449.0 370.9,447.3 373.4,445.7 376.0,444.0 378.5,442.4 381.0,440.8 383.6,439.2 386.1,437.6 388.6,435.9 391.2,434.3 393.7,432.7 396.2,431.1 398.8,429.5 401.3,427.9 403.8,426.3 406.4,424.7 408.9,423.1 411.4,421.5 414.0,420.0 416.5,418.4 419.0,416.8 421.6,415.2 424.1,413.6 426.6,412.1 429.2,410.5 431.7,408.9 434.2,407.4 436.8,405.8 439.3,404.3 441.8,402.7 444.4,401.2 446.9,399.6 449.4,398.1 452.0,396.5 454.5,395.0 457.0,393.5 459.5,391.9 462.1,390.4 464.6,388.9 467.1,387.3 469.7,385.8 472.2,384.3 474.7,382.8 477.3,381.3 479.8,379.7 482.3,378.2 484.9,376.7 487.4,375.2 489.9,373.7 492.5,372.2 495.0,370.7 497.5,369.2 500.1,367.7 502.6,366.2 505.1,364.7 507.7,363.2 510.2,361.8 512.7,360.3 515.3,358.8 517.8,357.3 520.3,355.8 522.9,354.3 525.4,352.9 527.9,351.4 530.5,349.9 533.0,348.5 535.5,347.0 538.1,345.5 540.6,344.1 543.1,342.6 545.7,341.1 548.2,339.7 550.7,338.2 553.2,336.8 555.8,335.3 558.3,333.9 560.8,332.4 563.4,331.0 565.9,329.6 568.4,328.1 571.0,326.7 573.5,325.2 576.0,323.8 578.6,322.4 581.1,320.9 583.6,319.5 586.2,318.1 588.7,316.6 591.2,315.2 593.8,313.8 596.3,312.4 598.8,311.0 601.4,309.5 603.9,308.1 606.4,306.7 609.0,305.3 611.5,303.9 614.0,302.5 616.6,301.1 619.1,299.7 621.6,298.3 624.2,296.8 626.7,295.4 629.2,294.0 631.8,292.6 634.3,291.3 636.8,289.9 639.4,288.5 641.9,287.1 644.4,285.7 647.0,284.3 649.5,282.9 652.0,281.5 654.6,280.1 657.1,278.7 659.6,277.4 662.1,276.0 664.7,274.6 667.2,273.2 669.7,271.9 672.3,270.5 674.8,269.1 677.3,267.7 679.9,266.4 682.4,265.0 684.9,263.6 687.5,262.3 690.0,260.9 692.5,259.5 695.1,258.2 697.6,256.8 700.1,255.4 702.7,254.1 705.2,252.7 707.7,251.4 710.3,250.0 712.8,248.7 715.3,247.3 717.9,246.0 720.4,244.6 722.9,243.3 725.5,241.9 728.0,240.6 730.5,239.2 733.1,237.9 735.6,236.6 738.1,235.2 740.7,233.9 743.2,232.5 745.7,231.2 748.3,229.9 750.8,228.5 753.3,227.2 755.8,225.9 758.4,224.5 760.9,223.2 763.4,221.9 766.0,220.6 768.5,219.2 771.0,217.9 773.6,216.6 776.1,215.3 778.6,214.0 781.2,212.6 783.7,211.3 786.2,210.0 788.8,208.7 791.3,207.4 793.8,206.1 796.4,204.7 798.9,203.4 801.4,202.1 804.0,200.8 806.5,199.5 809.0,198.2 811.6,196.9 814.1,195.6 816.6,194.3 819.2,193.0 821.7,191.7 824.2,190.4 826.8,189.1 829.3,187.8 831.8,186.5 834.4,185.2 836.9,183.9 839.4,182.6 842.0,181.3 844.5,180.0 847.0,178.7 849.6,177.4 852.1,176.1 854.6,174.9 857.2,173.6 859.7,172.3 862.2,171.0 864.7,169.7 867.3,168.4 869.8,167.2 872.3,165.9 874.9,164.6 877.4,163.3 879.9,162.0 882.5,160.8 885.0,159.5 887.5,158.2 890.1,156.9 892.6,155.7 895.1,154.4 897.7,153.1 900.2,151.9 902.7,150.6 905.3,149.3 907.8,148.1 910.3,146.8 912.9,145.5 915.4,144.3 917.9,143.0 920.5,141.7 923.0,140.5 925.5,139.2 928.1,137.9 930.6,136.7 933.1,135.4 935.7,134.2 938.2,132.9 940.7,131.7 943.3,130.4 945.8,129.2 948.3,127.9 950.9,126.7 953.4,125.4 955.9,124.2 958.4,122.9 961.0,121.7 963.5,120.4 966.0,119.2 968.6,117.9 971.1,116.7 973.6,115.4 976.2,114.2 978.7,112.9 981.2,111.7 983.8,110.5 986.3,109.2 988.8,108.0 991.4,106.7 993.9,105.5 996.4,104.3 999.0,103.0 1001.5,101.8 1004.0,100.6 1006.6,99.3 1009.1,98.1 1011.6,96.9 1014.2,95.6 1016.7,94.4 1019.2,93.2 1021.8,92.0 1024.3,90.7 1026.8,89.5 1029.4,88.3 1031.9,87.1 1034.4,85.8 1037.0,84.6 1039.5,83.4 1042.0,82.2 1044.6,80.9 1047.1,79.7 1049.6,78.5 1052.2,77.3 1054.7,76.1 1057.2,74.8 1059.8,73.6 1062.3,72.4 1064.8,71.2 1067.3,70.0 1069.9,68.8 1072.4,67.6 1074.9,66.3 1077.5,65.1 1080.0,63.9 1082.5,62.7 1085.1,61.5 1087.6,60.3 1090.1,59.1 1092.7,57.9 1095.2,56.7 1097.7,55.5 1100.3,54.3 1102.8,53.1 1105.3,51.9 1107.9,50.7 1110.4,49.5" fill="none" stroke="#0000ff" stroke-width="4.3" stroke-linejoin="round"/><path d="M97.4 19V699.8M96.9 699.3H1096M92 699.3H97.4M92 659.3H97.4M92 619.3H97.4M92 579.3H97.4M92 539.3H97.4M92 499.3H97.4M92 459.3H97.4M92 419.3H97.4M92 379.3H97.4M92 339.3H97.4M92 299.3H97.4M92 259.3H97.4M92 219.3H97.4M92 179.3H97.4M92 139.3H97.4M92 99.3H97.4M92 59.3H97.4M92 19.3H97.4M97.4 699.3V705.0M148.1 699.3V705.0M198.7 699.3V705.0M249.4 699.3V705.0M300.0 699.3V705.0M350.7 699.3V705.0M401.3 699.3V705.0M452.0 699.3V705.0M502.6 699.3V705.0M553.2 699.3V705.0M603.9 699.3V705.0M654.6 699.3V705.0M705.2 699.3V705.0M755.8 699.3V705.0M806.5 699.3V705.0M857.2 699.3V705.0M907.8 699.3V705.0M958.4 699.3V705.0M1009.1 699.3V705.0M1059.8 699.3V705.0" stroke="#000" stroke-width="1.25" fill="none"/><rect x="748.2" y="19.3" width="400" height="77" fill="#fff" stroke="#000" stroke-width="1.2"/><path d="M752.8 39.8h4.2m6,0h2.2m3.6,0h4.6" stroke="#0000ff" stroke-width="4" fill="none"/><path d="M752.8 75.6h22.4" stroke="#0000ff" stroke-width="4.4" fill="none"/><text transform="translate(52.40,704.90) scale(0.9739,1)" font-size="24.5" fill="#2a2a2a">450</text><text transform="translate(52.40,664.90) scale(0.9739,1)" font-size="24.5" fill="#2a2a2a">500</text><text transform="translate(52.40,624.90) scale(0.9739,1)" font-size="24.5" fill="#2a2a2a">550</text><text transform="translate(51.40,584.90) scale(0.9987,1)" font-size="24.5" fill="#2a2a2a">600</text><text transform="translate(51.40,544.90) scale(0.9987,1)" font-size="24.5" fill="#2a2a2a">650</text><text transform="translate(51.40,504.90) scale(0.9987,1)" font-size="24.5" fill="#2a2a2a">700</text><text transform="translate(51.40,464.90) scale(0.9987,1)" font-size="24.5" fill="#2a2a2a">750</text><text transform="translate(51.40,424.90) scale(0.9987,1)" font-size="24.5" fill="#2a2a2a">800</text><text transform="translate(51.40,384.90) scale(0.9987,1)" font-size="24.5" fill="#2a2a2a">850</text><text transform="translate(51.40,344.90) scale(0.9987,1)" font-size="24.5" fill="#2a2a2a">900</text><text transform="translate(51.40,304.90) scale(0.9987,1)" font-size="24.5" fill="#2a2a2a">950</text><text transform="translate(42.39,264.90) scale(0.9134,1)" font-size="24.5" fill="#2a2a2a">1000</text><text transform="translate(42.39,224.90) scale(0.9134,1)" font-size="24.5" fill="#2a2a2a">1050</text><text transform="translate(42.35,184.90) scale(0.9460,1)" font-size="24.5" fill="#2a2a2a">1100</text><text transform="translate(42.35,144.90) scale(0.9460,1)" font-size="24.5" fill="#2a2a2a">1150</text><text transform="translate(42.39,104.90) scale(0.9134,1)" font-size="24.5" fill="#2a2a2a">1200</text><text transform="translate(42.39,64.90) scale(0.9134,1)" font-size="24.5" fill="#2a2a2a">1250</text><text transform="translate(42.39,24.90) scale(0.9134,1)" font-size="24.5" fill="#2a2a2a">1300</text><text transform="translate(91.46,723.00) scale(0.9750,1)" font-size="24.5" fill="#2a2a2a">0</text><text transform="translate(125.51,723.00) scale(0.9750,1)" font-size="24.5" fill="#2a2a2a">0.05</text><text transform="translate(183.55,723.00) scale(0.9300,1)" font-size="24.5" fill="#2a2a2a">0.1</text><text transform="translate(227.87,723.00) scale(0.9300,1)" font-size="24.5" fill="#2a2a2a">0.15</text><text transform="translate(284.10,723.00) scale(0.9750,1)" font-size="24.5" fill="#2a2a2a">0.2</text><text transform="translate(328.11,723.00) scale(0.9750,1)" font-size="24.5" fill="#2a2a2a">0.25</text><text transform="translate(385.40,723.00) scale(0.9750,1)" font-size="24.5" fill="#2a2a2a">0.3</text><text transform="translate(429.41,723.00) scale(0.9750,1)" font-size="24.5" fill="#2a2a2a">0.35</text><text transform="translate(486.70,723.00) scale(0.9750,1)" font-size="24.5" fill="#2a2a2a">0.4</text><text transform="translate(530.71,723.00) scale(0.9750,1)" font-size="24.5" fill="#2a2a2a">0.45</text><text transform="translate(588.00,723.00) scale(0.9750,1)" font-size="24.5" fill="#2a2a2a">0.5</text><text transform="translate(632.01,723.00) scale(0.9750,1)" font-size="24.5" fill="#2a2a2a">0.55</text><text transform="translate(689.30,723.00) scale(0.9750,1)" font-size="24.5" fill="#2a2a2a">0.6</text><text transform="translate(733.31,723.00) scale(0.9750,1)" font-size="24.5" fill="#2a2a2a">0.65</text><text transform="translate(790.60,723.00) scale(0.9750,1)" font-size="24.5" fill="#2a2a2a">0.7</text><text transform="translate(834.61,723.00) scale(0.9750,1)" font-size="24.5" fill="#2a2a2a">0.75</text><text transform="translate(891.90,723.00) scale(0.9750,1)" font-size="24.5" fill="#2a2a2a">0.8</text><text transform="translate(935.91,723.00) scale(0.9750,1)" font-size="24.5" fill="#2a2a2a">0.85</text><text transform="translate(993.20,723.00) scale(0.9750,1)" font-size="24.5" fill="#2a2a2a">0.9</text><text transform="translate(1037.21,723.00) scale(0.9750,1)" font-size="24.5" fill="#2a2a2a">0.95</text><text transform="translate(597.20,755.20) scale(0.8700,1)" font-size="34" fill="#2a2a2a">x</text><text transform="translate(778.30,48.50) scale(0.9718,1)" font-size="35" fill="#2a2a2a">Test Data</text><text transform="translate(778.60,84.40) scale(0.9854,1)" font-size="35" fill="#2a2a2a">Johnson-Cook Curve</text><text transform="translate(29.80,387.00) rotate(-90) scale(1.0247,1)" font-size="33" fill="#2a2a2a">y(x)</text></svg>
</div>
</body></html>
